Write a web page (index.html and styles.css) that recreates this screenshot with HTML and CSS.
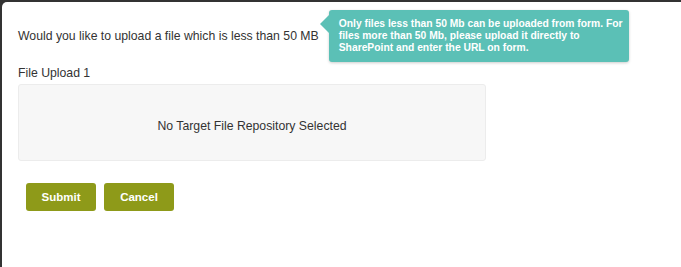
FILE: index.html
```html
<!DOCTYPE html>
<html>
<head>
<meta charset="utf-8">
<link rel="stylesheet" href="styles.css">
</head>
<body>
<div class="panel">
  <div class="question-row">
    <div class="question">Would you like to upload a file which is less than 50 MB</div>
    <div class="tip">Only files less than 50 Mb can be uploaded from form. For files more than 50 Mb, please upload it directly to SharePoint and enter the URL on form.</div>
  </div>
  <div class="label">File Upload 1</div>
  <div class="dropzone">No Target File Repository Selected</div>
  <div class="actions">
    <button class="btn">Submit</button>
    <button class="btn">Cancel</button>
  </div>
</div>
</body>
</html>
```
FILE: styles.css
```css
html, body {
  margin: 0;
  height: 100%;
}
body {
  background: #333333;
  font-family: "Liberation Sans", Arial, sans-serif;
  color: #333333;
  overflow: hidden;
}
.panel {
  margin: 2px 0 0 2px;
  background: #ffffff;
  border-top-left-radius: 5px;
  height: calc(100% - 2px);
  padding: 8px 0 0 16px;
  box-sizing: border-box;
}
.question-row {
  display: flex;
  align-items: center;
  gap: 10px;
}
.question {
  font-size: 12.25px;
  line-height: 16px;
}
.tip {
  position: relative;
  width: 300px;
  box-sizing: border-box;
  background: #5bc0b6;
  color: #ffffff;
  font-size: 10.3px;
  font-weight: bold;
  line-height: 12px;
  padding: 8px 4px 8px 10px;
  border-radius: 3px;
  box-shadow: 0 1px 3px rgba(0,0,0,0.2);
}
.tip::before {
  content: "";
  position: absolute;
  left: -9px;
  top: 5px;
  border-top: 9px solid transparent;
  border-bottom: 9px solid transparent;
  border-right: 9px solid #5bc0b6;
}
.label {
  font-size: 12.25px;
  line-height: 16px;
  margin-top: 3px;
}
.dropzone {
  margin-top: 3px;
  width: 468px;
  height: 77px;
  box-sizing: border-box;
  background: #f7f7f7;
  border: 1px solid #ececec;
  border-radius: 3px;
  text-align: center;
  font-size: 12.25px;
  line-height: 16px;
  padding-top: 33px;
}
.actions {
  display: flex;
  gap: 8px;
  margin: 22px 0 0 8px;
}
.btn {
  width: 70px;
  height: 28px;
  border: none;
  border-radius: 3px;
  background: #8e9a19;
  color: #ffffff;
  font-family: "Liberation Sans", Arial, sans-serif;
  font-size: 11.5px;
  font-weight: bold;
  padding: 0;
}
```
